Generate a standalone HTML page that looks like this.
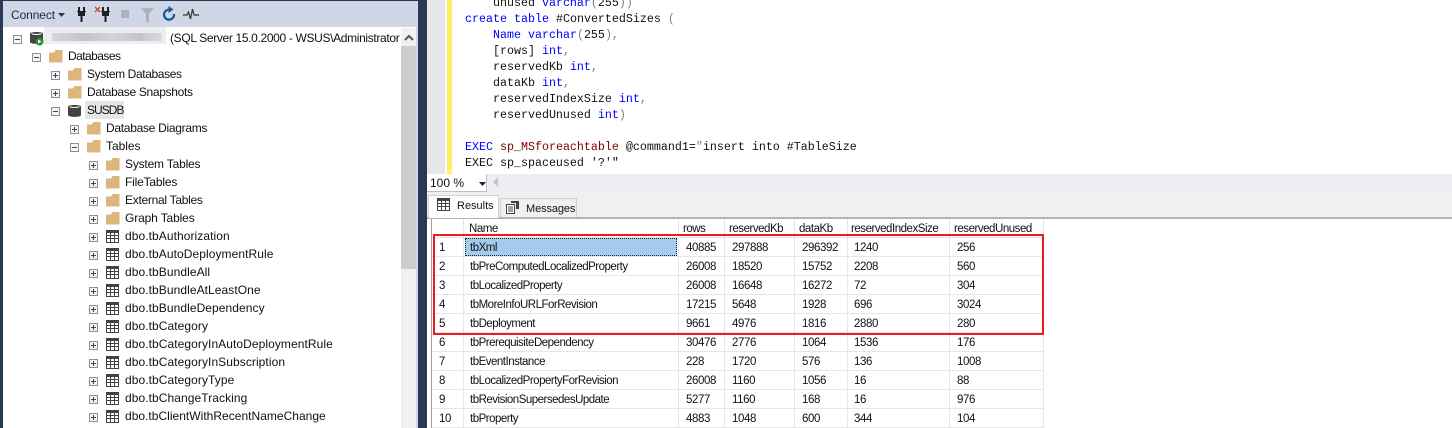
<!DOCTYPE html>
<html><head><meta charset="utf-8">
<style>
html,body{margin:0;padding:0}
#p{position:relative;width:1452px;height:428px;overflow:hidden;background:#fff;font-family:"Liberation Sans",sans-serif;color:#1a1a1a}
#p div,#p svg{position:absolute}
.t{font-size:12px;line-height:18px;height:18px;white-space:nowrap;letter-spacing:.07px;color:#111}
.c{font-family:"Liberation Mono",monospace;font-size:11.67px;line-height:16px;height:16px;white-space:pre;color:#111;left:465px}
.c b{font-weight:normal;color:#0000ff}.c i{font-style:normal;color:#808080}.c u{text-decoration:none;color:#800000}
.g{font-size:11.5px;line-height:19px;height:19px;white-space:nowrap;color:#111;margin-top:2px;letter-spacing:-.4px}
.g[style^="left:470"]{letter-spacing:-.5px}
.h{font-size:11.5px;line-height:18px;height:18px;white-space:nowrap;color:#111;top:220px;letter-spacing:-.47px}
.vl{width:1px;background:#e6e6e6;top:219px;height:209px}
.hl{height:1px;background:#e6e6e6;left:432px;width:612px}
</style></head><body><div id="p">
<svg width="0" height="0" style="left:0;top:0"><defs>
<g id="f"><path d="M0 2.500V12.500h13.500V0H6.500L5 2.500z" fill="#dcb67a"/></g>
<g id="tb"><rect x="0" y="0" width="13" height="13" fill="#424242"/><path d="M1 3h3v2H1zM5 3h3v2H5zM9 3h3v2H9zM1 6h3v2H1zM5 6h3v2H5zM9 6h3v2H9zM1 9h3v3H1zM5 9h3v3H5zM9 9h3v3H9z" fill="#fff"/></g>
<g id="pl"><rect x=".5" y=".5" width="8" height="8" fill="#f4f4f8" stroke="#8c8f98"/><path d="M2 4.500h5M4.500 2v5" stroke="#3b4560" fill="none"/></g>
<g id="mi"><rect x=".5" y=".5" width="8" height="8" fill="#f4f4f8" stroke="#8c8f98"/><path d="M2 4.500h5" stroke="#3b4560" fill="none"/></g>
<g id="db"><path d="M0 2.500C0 .5 13 .5 13 2.500V11C13 13.500 0 13.500 0 11z" fill="#424242"/><path d="M1.500 2.500C3 3.800 10 3.800 11.500 2.500" stroke="#fff" fill="none"/></g>
</defs></svg>

<!-- frame -->
<div style="left:0;top:0;width:3px;height:428px;background:#293955"></div>
<div style="left:0;top:0;width:420px;height:1px;background:#293955"></div>
<div style="left:3px;top:1px;width:415px;height:26px;background:#cfd6e5"></div>
<div style="left:416px;top:27px;width:2px;height:401px;background:#cfd6e5"></div>
<div style="left:418px;top:0;width:9px;height:428px;background:#293955"></div>

<!-- toolbar -->
<div style="left:11px;top:6px;font-size:12px;line-height:18px;color:#1e2a44;letter-spacing:-.1px">Connect</div>
<svg style="left:58px;top:13px" width="7" height="4"><path d="M0 0h7L3.500 4z" fill="#333"/></svg>
<svg style="left:76px;top:7px" width="11" height="15"><path d="M2 0h2v4H2zM7 0h2v4H7zM1 4h9v1h-1v4H2V5H1zM4.500 9h2v6h-2z" fill="#222"/></svg>
<svg style="left:95px;top:6px" width="16" height="16"><path d="M0 1l5 5M5 1L0 6" stroke="#c8402c" stroke-width="1.300"/><path d="M7 1h2v4H7zM12 1h2v4h-2zM6 5h9v1h-1v4H7V6H6zM9.500 10h2v6h-2z" fill="#222"/></svg>
<div style="left:121px;top:10px;width:8px;height:8px;background:#aeb2ba"></div>
<svg style="left:141px;top:8px" width="13" height="14"><path d="M0 0h13L8 6v8H5V6z" fill="#aeb2ba"/></svg>
<svg style="left:162px;top:6px" width="14" height="16"><path d="M9.500 4.300A5 5 0 1 0 12 8" fill="none" stroke="#0e5a9c" stroke-width="2.200"/><path d="M6.500 0v7l5-3.500z" fill="#0e5a9c"/></svg>
<svg style="left:183px;top:8px" width="16" height="12"><path d="M0 7h4l1.500-3 2 7 2-10 1.500 6h5" fill="none" stroke="#333" stroke-width="1.200"/></svg>

<!-- tree -->
<div style="left:44px;top:27px;width:122px;height:17px;background:#eceef1"></div>
<div style="left:52px;top:33px;width:110px;height:8px;background:linear-gradient(90deg,#d4d6dc,#c2c4cc 30%,#d2d4da 55%,#c4c6ce 80%,#d8dade)"></div>

<svg style="left:13px;top:35px" width="9" height="9"><use href="#mi"/></svg>
<svg style="left:30px;top:31px" width="15" height="15"><use href="#db"/><circle cx="9.500" cy="10.500" r="4" fill="#2e8b2e"/><path d="M8 8.500v4l3.500-2z" fill="#fff"/></svg>
<div class="t" style="left:170px;top:29px;letter-spacing:-.34px">(SQL Server 15.0.2000 - WSUS\Administrator</div>

<svg style="left:32px;top:53px" width="9" height="9"><use href="#mi"/></svg><svg style="left:49px;top:50px" width="14" height="13"><use href="#f"/></svg><div class="t" style="left:68px;top:47px;letter-spacing:-.55px">Databases</div>
<svg style="left:51px;top:71px" width="9" height="9"><use href="#pl"/></svg><svg style="left:68px;top:68px" width="14" height="13"><use href="#f"/></svg><div class="t" style="left:87px;top:65px;letter-spacing:-.38px">System Databases</div>
<svg style="left:51px;top:89px" width="9" height="9"><use href="#pl"/></svg><svg style="left:68px;top:86px" width="14" height="13"><use href="#f"/></svg><div class="t" style="left:87px;top:83px;letter-spacing:-.32px">Database Snapshots</div>
<svg style="left:51px;top:107px" width="9" height="9"><use href="#mi"/></svg>
<div style="left:85px;top:101px;width:39px;height:18px;background:#e6e6e6"></div><svg style="left:68px;top:104px" width="13" height="14"><use href="#db"/></svg><div class="t" style="left:87px;top:101px;letter-spacing:-1px">SUSDB</div>
<svg style="left:70px;top:125px" width="9" height="9"><use href="#pl"/></svg><svg style="left:87px;top:122px" width="14" height="13"><use href="#f"/></svg><div class="t" style="left:106px;top:119px;letter-spacing:-.29px">Database Diagrams</div>
<svg style="left:70px;top:143px" width="9" height="9"><use href="#mi"/></svg><svg style="left:87px;top:140px" width="14" height="13"><use href="#f"/></svg><div class="t" style="left:106px;top:137px;letter-spacing:-.05px">Tables</div>
<svg style="left:89px;top:161px" width="9" height="9"><use href="#pl"/></svg><svg style="left:106px;top:158px" width="14" height="13"><use href="#f"/></svg><div class="t" style="left:125px;top:155px;letter-spacing:-.19px">System Tables</div>
<svg style="left:89px;top:179px" width="9" height="9"><use href="#pl"/></svg><svg style="left:106px;top:176px" width="14" height="13"><use href="#f"/></svg><div class="t" style="left:125px;top:173px;letter-spacing:-.18px">FileTables</div>
<svg style="left:89px;top:197px" width="9" height="9"><use href="#pl"/></svg><svg style="left:106px;top:194px" width="14" height="13"><use href="#f"/></svg><div class="t" style="left:125px;top:191px;letter-spacing:-.28px">External Tables</div>
<svg style="left:89px;top:215px" width="9" height="9"><use href="#pl"/></svg><svg style="left:106px;top:212px" width="14" height="13"><use href="#f"/></svg><div class="t" style="left:125px;top:209px;letter-spacing:-.13px">Graph Tables</div>
<svg style="left:89px;top:233px" width="9" height="9"><use href="#pl"/></svg><svg style="left:106px;top:230px" width="13" height="13"><use href="#tb"/></svg><div class="t" style="left:125px;top:227px">dbo.tbAuthorization</div>
<svg style="left:89px;top:251px" width="9" height="9"><use href="#pl"/></svg><svg style="left:106px;top:248px" width="13" height="13"><use href="#tb"/></svg><div class="t" style="left:125px;top:245px">dbo.tbAutoDeploymentRule</div>
<svg style="left:89px;top:269px" width="9" height="9"><use href="#pl"/></svg><svg style="left:106px;top:266px" width="13" height="13"><use href="#tb"/></svg><div class="t" style="left:125px;top:263px">dbo.tbBundleAll</div>
<svg style="left:89px;top:287px" width="9" height="9"><use href="#pl"/></svg><svg style="left:106px;top:284px" width="13" height="13"><use href="#tb"/></svg><div class="t" style="left:125px;top:281px">dbo.tbBundleAtLeastOne</div>
<svg style="left:89px;top:305px" width="9" height="9"><use href="#pl"/></svg><svg style="left:106px;top:302px" width="13" height="13"><use href="#tb"/></svg><div class="t" style="left:125px;top:299px">dbo.tbBundleDependency</div>
<svg style="left:89px;top:323px" width="9" height="9"><use href="#pl"/></svg><svg style="left:106px;top:320px" width="13" height="13"><use href="#tb"/></svg><div class="t" style="left:125px;top:317px">dbo.tbCategory</div>
<svg style="left:89px;top:341px" width="9" height="9"><use href="#pl"/></svg><svg style="left:106px;top:338px" width="13" height="13"><use href="#tb"/></svg><div class="t" style="left:125px;top:335px">dbo.tbCategoryInAutoDeploymentRule</div>
<svg style="left:89px;top:359px" width="9" height="9"><use href="#pl"/></svg><svg style="left:106px;top:356px" width="13" height="13"><use href="#tb"/></svg><div class="t" style="left:125px;top:353px">dbo.tbCategoryInSubscription</div>
<svg style="left:89px;top:377px" width="9" height="9"><use href="#pl"/></svg><svg style="left:106px;top:374px" width="13" height="13"><use href="#tb"/></svg><div class="t" style="left:125px;top:371px">dbo.tbCategoryType</div>
<svg style="left:89px;top:395px" width="9" height="9"><use href="#pl"/></svg><svg style="left:106px;top:392px" width="13" height="13"><use href="#tb"/></svg><div class="t" style="left:125px;top:389px">dbo.tbChangeTracking</div>
<svg style="left:89px;top:413px" width="9" height="9"><use href="#pl"/></svg><svg style="left:106px;top:410px" width="13" height="13"><use href="#tb"/></svg><div class="t" style="left:125px;top:407px;letter-spacing:.02px">dbo.tbClientWithRecentNameChange</div>

<!-- scrollbar -->
<div style="left:401px;top:28px;width:15px;height:400px;background:#f0f0f0"></div>
<div style="left:401px;top:46px;width:15px;height:223px;background:#cdcdcd"></div>
<svg style="left:404px;top:34px" width="10" height="7"><path d="M1 6l4-4 4 4" fill="none" stroke="#555" stroke-width="2"/></svg>

<!-- editor -->
<div style="left:427px;top:0;width:1025px;height:174px;background:#fff"></div>
<div style="left:427px;top:0;width:18px;height:174px;background:#e6e7e8"></div>
<div style="left:447px;top:0;width:4.500px;height:174px;background:#ffee62"></div>
<div class="c" style="top:-5px">    unused <b>varchar</b><i>(</i>255<i>))</i></div>
<div class="c" style="top:11px"><b>create</b> <b>table</b> #ConvertedSizes <i>(</i></div>
<div class="c" style="top:27px">    <b>Name</b> <b>varchar</b><i>(</i>255<i>),</i></div>
<div class="c" style="top:43px">    [rows] <b>int</b><i>,</i></div>
<div class="c" style="top:59px">    reservedKb <b>int</b><i>,</i></div>
<div class="c" style="top:75px">    dataKb <b>int</b><i>,</i></div>
<div class="c" style="top:91px">    reservedIndexSize <b>int</b><i>,</i></div>
<div class="c" style="top:107px">    reservedUnused <b>int</b><i>)</i></div>
<div class="c" style="top:139px"><b>EXEC</b> <u>sp_MSforeachtable</u> @command1=<i>"</i>insert into #TableSize</div>
<div class="c" style="top:155px">EXEC sp_spaceused '?'"</div>

<!-- zoom bar -->
<div style="left:427px;top:174px;width:1025px;height:18px;background:#eeeef2"></div>
<div style="left:427px;top:174px;width:59px;height:17px;background:#fff;border-right:1px solid #b8c0d0;border-bottom:1px solid #b8c0d0"></div>
<div style="left:430px;top:174px;font-size:12px;line-height:18px;color:#111">100 %</div>
<svg style="left:479px;top:182px" width="7" height="4"><path d="M0 0h7L3.500 4z" fill="#222"/></svg>
<svg style="left:493px;top:177px" width="6" height="11"><path d="M5 0v10L0 5z" fill="#c4c4c8"/></svg>

<!-- results tabs -->
<div style="left:427px;top:192px;width:1025px;height:26px;background:#f0f0f0"></div>
<div style="left:427px;top:217px;width:1025px;height:2px;background:#b4b4b4"></div>
<div style="left:500px;top:198px;width:77px;height:19px;background:#f0f0f0;border:1px solid #d0d0d0;border-bottom:0;box-sizing:border-box"></div>
<div style="left:428px;top:195px;width:71px;height:23px;background:#fff;border:1px solid #d0d0d0;border-bottom:0;box-sizing:border-box"></div>
<svg style="left:437px;top:198px" width="13" height="13"><use href="#tb"/></svg>
<div style="left:457px;top:197px;font-size:11px;line-height:18px;color:#111">Results</div>
<svg style="left:505px;top:200px" width="15" height="15"><path d="M1.500 4.500h8v9h-8z" fill="#fff" stroke="#424242"/><path d="M3 7h5M3 9h5M3 11h5" stroke="#424242"/><path d="M6 1h8v8h-3V3H6z" fill="#424242"/></svg>
<div style="left:526px;top:200px;font-size:11px;line-height:18px;color:#111;letter-spacing:-.1px">Messages</div>

<!-- grid -->
<div style="left:431px;top:219px;width:1021px;height:209px;background:#fff"></div>
<div style="left:431px;top:219px;width:1px;height:209px;background:#a0a0a0"></div>
<div class="vl" style="left:463px"></div><div class="vl" style="left:678px"></div><div class="vl" style="left:724px"></div><div class="vl" style="left:794px"></div><div class="vl" style="left:847px"></div><div class="vl" style="left:949px"></div><div class="vl" style="left:1043px"></div>
<div class="hl" style="top:237px"></div><div class="hl" style="top:256px"></div><div class="hl" style="top:275px"></div><div class="hl" style="top:294px"></div><div class="hl" style="top:313px"></div><div class="hl" style="top:332px"></div><div class="hl" style="top:351px"></div><div class="hl" style="top:370px"></div><div class="hl" style="top:389px"></div><div class="hl" style="top:408px"></div><div class="hl" style="top:427px"></div>
<div class="h" style="left:469px">Name</div><div class="h" style="left:683px">rows</div><div class="h" style="left:729px">reservedKb</div><div class="h" style="left:799px">dataKb</div><div class="h" style="left:851px">reservedIndexSize</div><div class="h" style="left:954px">reservedUnused</div>
<div style="left:465px;top:238px;width:212px;height:18px;background:#a2cbee;outline:1px dotted #222;outline-offset:-1px"></div>

<div class="g" style="left:439px;top:237px">1</div><div class="g" style="left:470px;top:237px">tbXml</div><div class="g" style="left:686px;top:237px">40885</div><div class="g" style="left:732px;top:237px">297888</div><div class="g" style="left:802px;top:237px">296392</div><div class="g" style="left:854px;top:237px">1240</div><div class="g" style="left:957px;top:237px">256</div>
<div class="g" style="left:439px;top:256px">2</div><div class="g" style="left:470px;top:256px">tbPreComputedLocalizedProperty</div><div class="g" style="left:686px;top:256px">26008</div><div class="g" style="left:732px;top:256px">18520</div><div class="g" style="left:802px;top:256px">15752</div><div class="g" style="left:854px;top:256px">2208</div><div class="g" style="left:957px;top:256px">560</div>
<div class="g" style="left:439px;top:275px">3</div><div class="g" style="left:470px;top:275px">tbLocalizedProperty</div><div class="g" style="left:686px;top:275px">26008</div><div class="g" style="left:732px;top:275px">16648</div><div class="g" style="left:802px;top:275px">16272</div><div class="g" style="left:854px;top:275px">72</div><div class="g" style="left:957px;top:275px">304</div>
<div class="g" style="left:439px;top:294px">4</div><div class="g" style="left:470px;top:294px">tbMoreInfoURLForRevision</div><div class="g" style="left:686px;top:294px">17215</div><div class="g" style="left:732px;top:294px">5648</div><div class="g" style="left:802px;top:294px">1928</div><div class="g" style="left:854px;top:294px">696</div><div class="g" style="left:957px;top:294px">3024</div>
<div class="g" style="left:439px;top:313px">5</div><div class="g" style="left:470px;top:313px">tbDeployment</div><div class="g" style="left:686px;top:313px">9661</div><div class="g" style="left:732px;top:313px">4976</div><div class="g" style="left:802px;top:313px">1816</div><div class="g" style="left:854px;top:313px">2880</div><div class="g" style="left:957px;top:313px">280</div>
<div class="g" style="left:439px;top:332px">6</div><div class="g" style="left:470px;top:332px">tbPrerequisiteDependency</div><div class="g" style="left:686px;top:332px">30476</div><div class="g" style="left:732px;top:332px">2776</div><div class="g" style="left:802px;top:332px">1064</div><div class="g" style="left:854px;top:332px">1536</div><div class="g" style="left:957px;top:332px">176</div>
<div class="g" style="left:439px;top:351px">7</div><div class="g" style="left:470px;top:351px">tbEventInstance</div><div class="g" style="left:686px;top:351px">228</div><div class="g" style="left:732px;top:351px">1720</div><div class="g" style="left:802px;top:351px">576</div><div class="g" style="left:854px;top:351px">136</div><div class="g" style="left:957px;top:351px">1008</div>
<div class="g" style="left:439px;top:370px">8</div><div class="g" style="left:470px;top:370px">tbLocalizedPropertyForRevision</div><div class="g" style="left:686px;top:370px">26008</div><div class="g" style="left:732px;top:370px">1160</div><div class="g" style="left:802px;top:370px">1056</div><div class="g" style="left:854px;top:370px">16</div><div class="g" style="left:957px;top:370px">88</div>
<div class="g" style="left:439px;top:389px">9</div><div class="g" style="left:470px;top:389px">tbRevisionSupersedesUpdate</div><div class="g" style="left:686px;top:389px">5277</div><div class="g" style="left:732px;top:389px">1160</div><div class="g" style="left:802px;top:389px">168</div><div class="g" style="left:854px;top:389px">16</div><div class="g" style="left:957px;top:389px">976</div>
<div class="g" style="left:439px;top:408px">10</div><div class="g" style="left:470px;top:408px">tbProperty</div><div class="g" style="left:686px;top:408px">4883</div><div class="g" style="left:732px;top:408px">1048</div><div class="g" style="left:802px;top:408px">600</div><div class="g" style="left:854px;top:408px">344</div><div class="g" style="left:957px;top:408px">104</div>

<!-- highlight -->
<div style="left:433px;top:234px;width:611px;height:101px;border:2px solid #ed1c24;box-sizing:border-box"></div>
</div></body></html>
